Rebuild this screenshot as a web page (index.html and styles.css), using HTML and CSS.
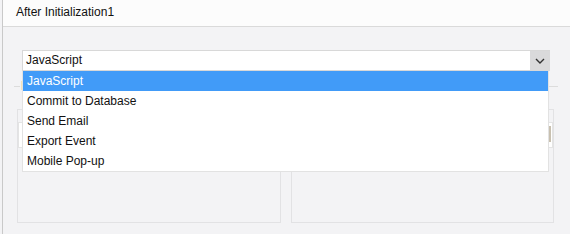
FILE: index.html
```html
<!DOCTYPE html>
<html lang="en">
<head>
  <meta charset="UTF-8" />
  <title>After Initialization1</title>
  <link rel="stylesheet" href="styles.css">
</head>
<body>
  <div class="dialog">
    <div class="title">After Initialization1</div>

    <div class="content">
      <div class="select-wrap">
        <div class="select">
          <span class="value">JavaScript</span>
          <span class="arrow">
            <svg width="10" height="6" viewBox="0 0 10 6"><path d="M1 1 L5 5 L9 1" fill="none" stroke="#333" stroke-width="1.4"/></svg>
          </span>
        </div>
        <ul class="options">
          <li class="active">JavaScript</li>
          <li>Commit to Database</li>
          <li>Send Email</li>
          <li>Export Event</li>
          <li>Mobile Pop-up</li>
        </ul>
      </div>

      <div class="group-head">
        <span class="line short"></span>
        <span class="legend">I</span>
        <span class="line"></span>
      </div>

      <div class="panels">
        <div class="panel">
          <div class="field"></div>
        </div>
        <div class="panel">
          <div class="field area"><span class="thumb"></span></div>
        </div>
      </div>
    </div>
  </div>
</body>
</html>
```

FILE: styles.css
```css
html, body {
  margin: 0;
  padding: 0;
  height: 100%;
}
body {
  font-family: Tahoma, "DejaVu Sans", "Liberation Sans", sans-serif;
  font-size: 12px;
  color: #111;
  background: #f3f3f5;
}
.dialog {
  margin-left: 2px;
  border-left: 1px solid #c9c9c9;
  height: 100%;
  background: #f3f3f5;
}
.title {
  height: 26px;
  line-height: 25px;
  padding-left: 13px;
  background: #fcfcfc;
  border-bottom: 1px solid #dadada;
  font-family: "Liberation Sans", Arial, sans-serif;
  font-size: 12px;
  color: #111;
}
.content {
  padding: 23px 12px 0 11px;
}
.select-wrap {
  position: relative;
  margin: 0 8px 0 8px;
}
.select {
  display: flex;
  height: 19px;
  border: 1px solid #d8d8d8;
  border-right: none;
  background: #fff;
  font-family: "Liberation Sans", Arial, sans-serif;
}
.select .value {
  flex: 1;
  line-height: 19px;
  padding-left: 3px;
}
.select .arrow {
  width: 20px;
  display: flex;
  align-items: center;
  justify-content: center;
  background: #dadadb;
}
.options {
  position: absolute;
  top: 21px;
  left: 0;
  right: 1px;
  margin: 0;
  padding: 0;
  list-style: none;
  background: #fff;
  border: 1px solid #e2e2e2;
  border-top: none;
  font-family: "Liberation Sans", Arial, sans-serif;
  z-index: 2;
}
.options li {
  height: 20px;
  line-height: 20px;
  padding-left: 4px;
}
.options li.active {
  background: #419bf8;
  color: #fff;
}
.group-head {
  display: flex;
  align-items: center;
  margin-top: 8px;
  height: 14px;
}
.group-head .line {
  flex: 1;
  border-top: 1px solid #dcdcdc;
}
.group-head .line.short {
  flex: 0 0 6px;
}
.legend {
  padding: 0 4px 0 1px;
  font-family: "Liberation Sans", Arial, sans-serif;
}
.panels {
  display: grid;
  grid-template-columns: 1fr 1fr;
  gap: 10px;
  margin: 16px 4px 0 3px;
}
.panel {
  height: 112px;
  border: 1px solid #e2e2e4;
  background: #f3f3f5;
}
.field {
  margin-top: 12px;
  height: 24px;
  background: #fff;
  border: 1px solid #e4e4e4;
}
.field.area {
  position: relative;
}
.field.area .thumb {
  position: absolute;
  right: 1px;
  top: 3px;
  width: 2px;
  height: 16px;
  background: #c8c0b0;
}
```
